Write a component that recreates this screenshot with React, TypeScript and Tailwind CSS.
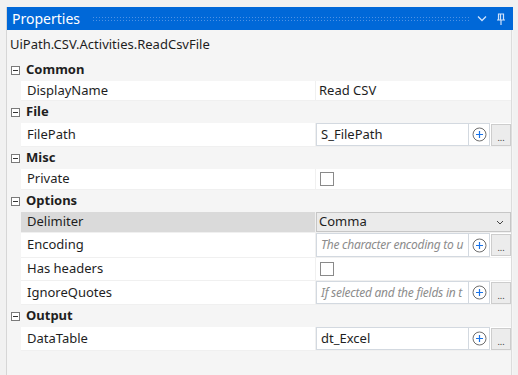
import React from 'react'

type Row =
  | { kind: 'text'; label: string; value: string; h: string }
  | { kind: 'input'; label: string; value: string; placeholder?: boolean; h: string }
  | { kind: 'check'; label: string; h: string }
  | { kind: 'select'; label: string; value: string; h: string }

const GROUPS: { name: string; rows: Row[] }[] = [
  { name: 'Common', rows: [{ kind: 'text', label: 'DisplayName', value: 'Read CSV', h: 'h-[20px]' }] },
  { name: 'File', rows: [{ kind: 'input', label: 'FilePath', value: 'S_FilePath', h: 'h-[24px]' }] },
  { name: 'Misc', rows: [{ kind: 'check', label: 'Private', h: 'h-[21px]' }] },
  {
    name: 'Options',
    rows: [
      { kind: 'select', label: 'Delimiter', value: 'Comma', h: 'h-[21px]' },
      { kind: 'input', label: 'Encoding', value: 'The character encoding to u', placeholder: true, h: 'h-[25px]' },
      { kind: 'check', label: 'Has headers', h: 'h-[23px]' },
      { kind: 'input', label: 'IgnoreQuotes', value: 'If selected and the fields in t', placeholder: true, h: 'h-[24px]' },
    ],
  },
  { name: 'Output', rows: [{ kind: 'input', label: 'DataTable', value: 'dt_Excel', h: 'h-[24px]' }] },
]

function Expander() {
  return (
    <span className="w-[9px] h-[9px] border border-[#7a7a7a] flex items-center justify-center bg-white">
      <span className="w-[5px] h-px bg-[#333]" />
    </span>
  )
}

function PlusCircle() {
  return (
    <svg width="15" height="15" viewBox="0 0 15 15">
      <circle cx="7.5" cy="7.5" r="6.5" fill="white" stroke="#6e6e6e" strokeWidth="1" />
      <path d="M7.5 4v7M4 7.5h7" stroke="#1a73e8" strokeWidth="1.2" />
    </svg>
  )
}

function ValueCell({ row }: { row: Row }) {
  if (row.kind === 'text') return <span className="pl-[3px] text-[#1e1e1e]">{row.value}</span>
  if (row.kind === 'check')
    return <span className="ml-[4px] w-[14px] h-[14px] border border-[#8a8a8a] bg-white" />
  if (row.kind === 'select')
    return (
      <div className="flex-1 h-full flex items-center justify-between bg-[#ebebeb] border border-[#c6c6c6] pl-[2px] pr-[6px]">
        <span>{row.value}</span>
        <svg width="8" height="5" viewBox="0 0 8 5">
          <path d="M1 1l3 3 3-3" fill="none" stroke="#444" strokeWidth="1" />
        </svg>
      </div>
    )
  return (
    <div className="flex-1 min-w-0 h-full flex items-center">
      <div className="flex-1 h-full flex items-center border border-[#d3d9e0] bg-white min-w-0">
        <span
          className={`flex-1 min-w-0 overflow-hidden whitespace-nowrap pl-[4px] ${
            row.placeholder ? 'italic text-[12px] tracking-[-0.25px] pl-[3px] text-[#8c8c8c]' : 'text-[#1e1e1e]'
          }`}
        >
          {row.value}
        </span>
        <span className="w-[21px] shrink-0 h-full border-l border-[#d3d9e0] flex items-center justify-center">
          <PlusCircle />
        </span>
      </div>
      <span className="w-[20px] shrink-0 h-[22px] ml-[1px] bg-[#ececec] border border-[#cdcdcd] flex items-end justify-center pb-[3px] text-[9px] leading-none text-[#333]">
        ...
      </span>
    </div>
  )
}

export default function App() {
  return (
    <div
      className="w-[518px] h-[375px] bg-[#f1f1f1] pt-[7px] pl-[6px] pr-[5px] overflow-hidden text-[13px] text-[#1e1e1e]"
      style={{ fontFamily: '"Segoe UI", "Noto Sans", sans-serif' }}
    >
      <div className="h-full flex flex-col border-l border-[#d6d6d6] bg-[#f5f5f5]">
        {/* title bar */}
        <div className="h-[23px] bg-[#0068d8] flex items-center pl-[5px] pr-[8px] text-white shrink-0">
          <span className="text-[14px] leading-none">Properties</span>
          <span className="flex-1 h-[5px] ml-[12px] mr-[8px] bg-[radial-gradient(#4e92e4_0.8px,transparent_0.8px)] bg-[length:3px_3px]" />
          <svg width="10" height="7" viewBox="0 0 10 7" className="mr-[10px]">
            <path d="M1 1.5l4 4 4-4" fill="none" stroke="#cfe2fb" strokeWidth="1.3" />
          </svg>
          <svg width="8" height="12" viewBox="0 0 8 12">
            <path d="M1.5 1h5v6h-5z M0 7h8 M4 7v5 M3.5 1.5v5" fill="none" stroke="#cfe2fb" strokeWidth="1.2" />
          </svg>
        </div>

        {/* content */}
        <div className="flex-1 border-r border-[#dcdcdc] mr-[1px]">
          <div className="h-[29px] flex items-center pl-[3px]">UiPath.CSV.Activities.ReadCsvFile</div>
          {GROUPS.map((g) => (
            <div key={g.name}>
              <div className="h-[22px] flex items-center pl-[4px] gap-[6px]">
                <Expander />
                <span className="font-bold text-[13px]">{g.name}</span>
              </div>
              {g.rows.map((r) => (
                <div
                  key={r.label}
                  className={`ml-[14px] flex items-center bg-white border-b border-[#f0f0f0] ${r.h}`}
                >
                  <div
                    className={`w-[295px] shrink-0 h-full flex items-center pl-[6px] border-r border-[#f0f0f0] ${
                      r.kind === 'select' ? 'bg-[#dadada]' : ''
                    }`}
                  >
                    {r.label}
                  </div>
                  <div className="flex-1 min-w-0 h-full flex items-center">
                    <ValueCell row={r} />
                  </div>
                </div>
              ))}
            </div>
          ))}
        </div>
      </div>
    </div>
  )
}
